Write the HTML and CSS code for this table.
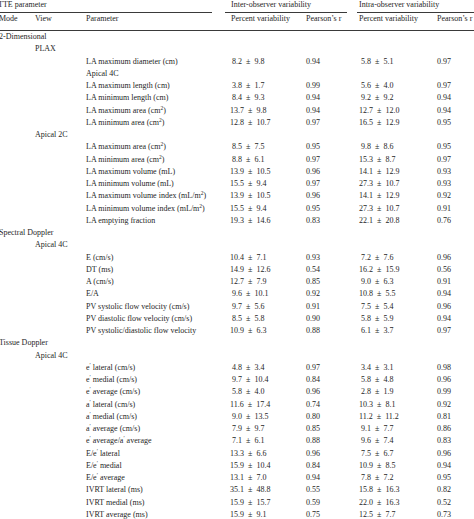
FILE: index.html
```html
<!DOCTYPE html>
<html>
<head>
<meta charset="utf-8">
<link rel="stylesheet" href="styles.css">
</head>
<body>
<table class="tt">
<colgroup>
<col class="w1"><col class="w2"><col class="w3"><col class="w4"><col class="w5"><col class="w6"><col class="w7">
</colgroup>
<thead>
<tr class="h1">
<th colspan="3"><div class="rule r1">TTE parameter</div></th>
<th colspan="2"><div class="rule r2">Inter-observer variability</div></th>
<th colspan="2"><div class="rule r3">Intra-observer variability</div></th>
</tr>
<tr class="h2">
<th class="c1">Mode</th><th>View</th><th>Parameter</th><th class="c4">Percent variability</th><th>Pearson’s r</th><th>Percent variability</th><th>Pearson’s r</th>
</tr>
</thead>
<tbody>
<tr><td class="c1" colspan="7">2-Dimensional</td></tr>
<tr><td></td><td colspan="6">PLAX</td></tr>
<tr><td></td><td></td><td>LA maximum diameter (cm)</td><td class="pv s">8.2 ± 9.8</td><td>0.94</td><td class="pv s">5.8 ± 5.1</td><td>0.97</td></tr>
<tr><td></td><td></td><td colspan="5">Apical 4C</td></tr>
<tr><td></td><td></td><td>LA maximum length (cm)</td><td class="pv s">3.8 ± 1.7</td><td>0.99</td><td class="pv s">5.6 ± 4.0</td><td>0.97</td></tr>
<tr><td></td><td></td><td>LA minimum length (cm)</td><td class="pv s">8.4 ± 9.3</td><td>0.94</td><td class="pv s">9.2 ± 9.2</td><td>0.94</td></tr>
<tr><td></td><td></td><td>LA maximum area (cm<sup>2</sup>)</td><td class="pv">13.7 ± 9.8</td><td>0.94</td><td class="pv">12.7 ± 12.0</td><td>0.94</td></tr>
<tr><td></td><td></td><td>LA minimum area (cm<sup>2</sup>)</td><td class="pv">12.8 ± 10.7</td><td>0.97</td><td class="pv">16.5 ± 12.9</td><td>0.95</td></tr>
<tr><td></td><td colspan="6">Apical 2C</td></tr>
<tr><td></td><td></td><td>LA maximum area (cm<sup>2</sup>)</td><td class="pv s">8.5 ± 7.5</td><td>0.95</td><td class="pv s">9.8 ± 8.6</td><td>0.95</td></tr>
<tr><td></td><td></td><td>LA minimum area (cm<sup>2</sup>)</td><td class="pv s">8.8 ± 6.1</td><td>0.97</td><td class="pv">15.3 ± 8.7</td><td>0.97</td></tr>
<tr><td></td><td></td><td>LA maximum volume (mL)</td><td class="pv">13.9 ± 10.5</td><td>0.96</td><td class="pv">14.1 ± 12.9</td><td>0.93</td></tr>
<tr><td></td><td></td><td>LA minimum volume (mL)</td><td class="pv">15.5 ± 9.4</td><td>0.97</td><td class="pv">27.3 ± 10.7</td><td>0.93</td></tr>
<tr><td></td><td></td><td>LA maximum volume index (mL/m<sup>2</sup>)</td><td class="pv">13.9 ± 10.5</td><td>0.96</td><td class="pv">14.1 ± 12.9</td><td>0.92</td></tr>
<tr><td></td><td></td><td>LA minimum volume index (mL/m<sup>2</sup>)</td><td class="pv">15.5 ± 9.4</td><td>0.95</td><td class="pv">27.3 ± 10.7</td><td>0.91</td></tr>
<tr><td></td><td></td><td>LA emptying fraction</td><td class="pv">19.3 ± 14.6</td><td>0.83</td><td class="pv">22.1 ± 20.8</td><td>0.76</td></tr>
<tr><td class="c1" colspan="7">Spectral Doppler</td></tr>
<tr><td></td><td colspan="6">Apical 4C</td></tr>
<tr><td></td><td></td><td>E (cm/s)</td><td class="pv">10.4 ± 7.1</td><td>0.93</td><td class="pv s">7.2 ± 7.6</td><td>0.96</td></tr>
<tr><td></td><td></td><td>DT (ms)</td><td class="pv">14.9 ± 12.6</td><td>0.54</td><td class="pv">16.2 ± 15.9</td><td>0.56</td></tr>
<tr><td></td><td></td><td>A (cm/s)</td><td class="pv">12.7 ± 7.9</td><td>0.85</td><td class="pv s">9.0 ± 6.3</td><td>0.91</td></tr>
<tr><td></td><td></td><td>E/A</td><td class="pv s">9.6 ± 10.1</td><td>0.92</td><td class="pv">10.8 ± 5.5</td><td>0.94</td></tr>
<tr><td></td><td></td><td>PV systolic flow velocity (cm/s)</td><td class="pv s">9.7 ± 5.6</td><td>0.91</td><td class="pv s">7.5 ± 5.4</td><td>0.96</td></tr>
<tr><td></td><td></td><td>PV diastolic flow velocity (cm/s)</td><td class="pv s">8.5 ± 5.8</td><td>0.90</td><td class="pv s">5.8 ± 5.9</td><td>0.94</td></tr>
<tr><td></td><td></td><td>PV systolic/diastolic flow velocity</td><td class="pv">10.9 ± 6.3</td><td>0.88</td><td class="pv s">6.1 ± 3.7</td><td>0.97</td></tr>
<tr><td class="c1" colspan="7">Tissue Doppler</td></tr>
<tr><td></td><td colspan="6">Apical 4C</td></tr>
<tr><td></td><td></td><td>e<sup>′</sup> lateral (cm/s)</td><td class="pv s">4.8 ± 3.4</td><td>0.97</td><td class="pv s">3.4 ± 3.1</td><td>0.98</td></tr>
<tr><td></td><td></td><td>e<sup>′</sup> medial (cm/s)</td><td class="pv s">9.7 ± 10.4</td><td>0.84</td><td class="pv s">5.8 ± 4.8</td><td>0.96</td></tr>
<tr><td></td><td></td><td>e<sup>′</sup> average (cm/s)</td><td class="pv s">5.8 ± 4.0</td><td>0.96</td><td class="pv s">2.8 ± 1.9</td><td>0.99</td></tr>
<tr><td></td><td></td><td>a<sup>′</sup> lateral (cm/s)</td><td class="pv">11.6 ± 17.4</td><td>0.74</td><td class="pv">10.3 ± 8.1</td><td>0.92</td></tr>
<tr><td></td><td></td><td>a<sup>′</sup> medial (cm/s)</td><td class="pv s">9.0 ± 13.5</td><td>0.80</td><td class="pv">11.2 ± 11.2</td><td>0.81</td></tr>
<tr><td></td><td></td><td>a<sup>′</sup> average (cm/s)</td><td class="pv s">7.9 ± 9.7</td><td>0.85</td><td class="pv s">9.1 ± 7.7</td><td>0.86</td></tr>
<tr><td></td><td></td><td>e<sup>′</sup> average/a<sup>′</sup> average</td><td class="pv s">7.1 ± 6.1</td><td>0.88</td><td class="pv s">9.6 ± 7.4</td><td>0.83</td></tr>
<tr><td></td><td></td><td>E/e<sup>′</sup> lateral</td><td class="pv">13.3 ± 6.6</td><td>0.96</td><td class="pv s">7.5 ± 6.7</td><td>0.96</td></tr>
<tr><td></td><td></td><td>E/e<sup>′</sup> medial</td><td class="pv">15.9 ± 10.4</td><td>0.84</td><td class="pv">10.9 ± 8.5</td><td>0.94</td></tr>
<tr><td></td><td></td><td>E/e<sup>′</sup> average</td><td class="pv">13.1 ± 7.0</td><td>0.94</td><td class="pv s">7.8 ± 7.2</td><td>0.95</td></tr>
<tr><td></td><td></td><td>IVRT lateral (ms)</td><td class="pv">35.1 ± 48.8</td><td>0.55</td><td class="pv">15.8 ± 16.3</td><td>0.82</td></tr>
<tr><td></td><td></td><td>IVRT medial (ms)</td><td class="pv">15.9 ± 15.7</td><td>0.59</td><td class="pv">22.0 ± 16.3</td><td>0.52</td></tr>
<tr><td></td><td></td><td>IVRT average (ms)</td><td class="pv">15.9 ± 9.1</td><td>0.75</td><td class="pv">12.5 ± 7.7</td><td>0.73</td></tr>
</tbody>
</table>
</body>
</html>
```
FILE: styles.css
```css
html, body {
  margin: 0;
  padding: 0;
  background: #ffffff;
  overflow: hidden;
}
body {
  width: 474px;
  height: 519px;
  font-family: "Liberation Serif", "Times New Roman", serif;
  font-size: 8px;
  color: #262626;
}
.tt {
  margin-left: -2px;
  border-collapse: collapse;
  table-layout: fixed;
  width: 492px;
}
.w1 { width: 37px; }
.w2 { width: 51px; }
.w3 { width: 144px; }
.w4 { width: 76px; }
.w5 { width: 53px; }
.w6 { width: 78px; }
.w7 { width: 53px; }
th, td {
  padding: 0;
  font-weight: normal;
  text-align: left;
  white-space: nowrap;
  vertical-align: top;
}
.h1 th {
  height: 13px;
}
.rule {
  line-height: 10px;
  padding-bottom: 2px;
  border-bottom: 1px solid #3a3a3a;
}
.r1 { margin-right: 18px; }
.r2 { margin-left: -5px; margin-right: 12px; padding-left: 6px; }
.r3 { margin-left: -2px; padding-left: 2px; }
.h2 th {
  line-height: 12px;
  padding-bottom: 5px;
  border-bottom: 1px solid #3a3a3a;
}
.h2 .c4 { padding-left: 1px; }
.c1 { padding-left: 1px; }
tbody td {
  height: 12.25px;
  line-height: 12.25px;
}
.pv { word-spacing: 2px; }
.pv.s { padding-left: 2px; }
sup {
  font-size: 5.5px;
  line-height: 0;
  vertical-align: 3px;
}
```
